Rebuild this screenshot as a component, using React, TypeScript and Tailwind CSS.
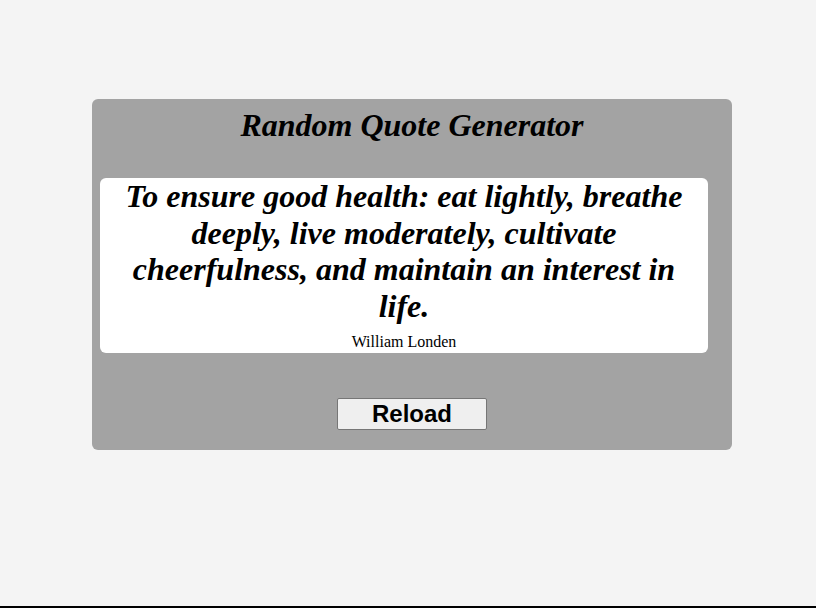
export default function App() {
  return (
    <div className="min-h-[608px] bg-[#f4f4f4] flex flex-col" style={{ fontFamily: '"Liberation Serif", "Times New Roman", serif' }}>
      <div className="flex-1 pt-[99px]">
        <div className="w-[640px] ml-[92px] bg-[#a3a3a3] rounded-md pt-[8px] pb-[20px] px-2">
          <h1 className="text-[32px] leading-[37px] font-bold italic text-center text-black">Random Quote Generator</h1>
          <div className="mt-[34px] w-[608px] bg-white rounded-md text-center">
            <p className="text-[32px] leading-[36.5px] font-bold italic text-black px-4">
              To ensure good health: eat lightly, breathe deeply, live moderately, cultivate cheerfulness, and maintain an interest in life.
            </p>
            <p className="mt-[8px] text-[16px] leading-[20px] text-black pb-[1px]">William Londen</p>
          </div>
          <div className="flex justify-center mt-[45px]">
            <button className="w-[150px] h-[32px] flex items-center justify-center bg-[#efefef] border border-[#767676] rounded-[2px] text-[24px] leading-[26px] font-bold text-black" style={{ fontFamily: '"Liberation Sans", Arial, sans-serif' }}>
              Reload
            </button>
          </div>
        </div>
      </div>
      <div className="h-[2px] bg-black" />
    </div>
  );
}
